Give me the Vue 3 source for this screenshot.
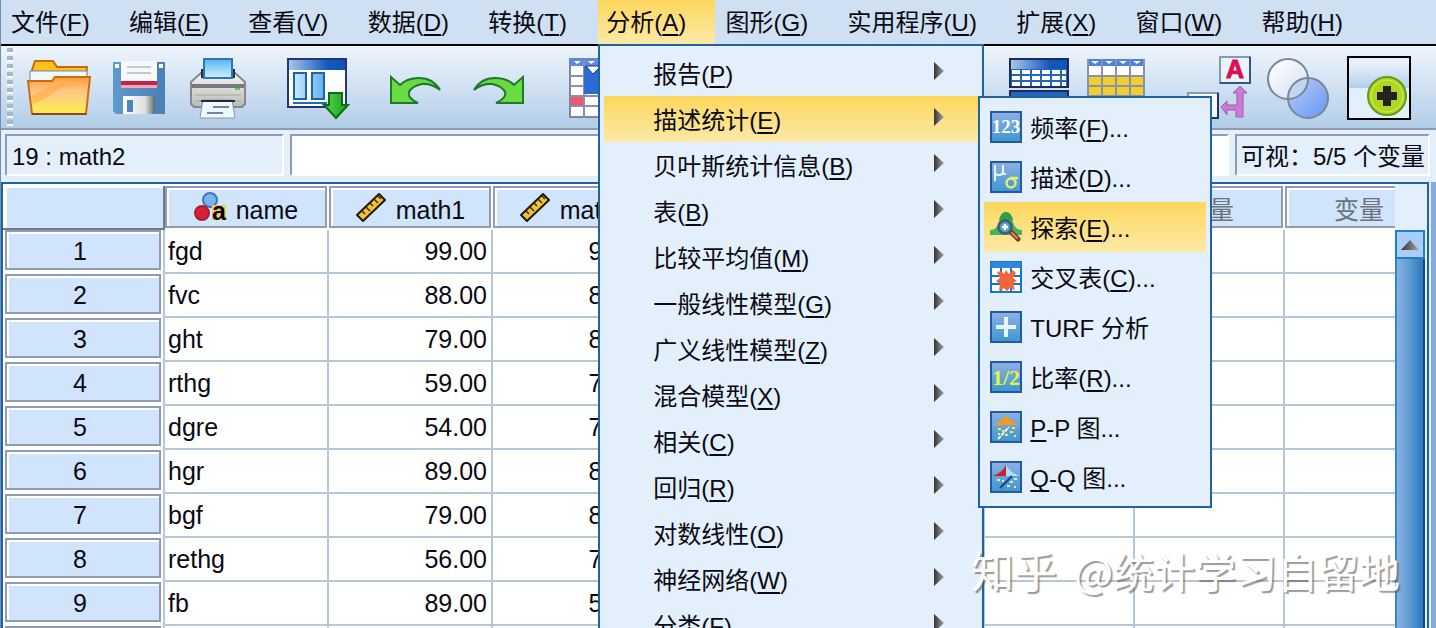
<template>
  <div class="app">
    <nav class="menubar">
      <div v-for="m in menus" :key="m.key" class="menu-wrap">
        <button
          type="button"
          class="menu-btn"
          :class="{ active: m.key === openMenu }"
          @click="toggleMenu(m.key)"
        >
          {{ m.label }}(<u>{{ m.key }}</u>)
        </button>
        <ul v-if="m.key === 'A' && openMenu === 'A'" class="dropdown" role="menu">
          <li v-for="(it, i) in analyzeItems" :key="i" class="drop-row" role="none">
            <button
              type="button"
              class="drop-item"
              :class="{ active: i === openItem }"
              role="menuitem"
              @click="openItem = i"
            >
              <span>{{ it.label }}(<u>{{ it.key }}</u>)</span>
              <svg class="drop-arrow" width="10" height="18" viewBox="0 0 10 18">
                <path d="M0 0 10 9 0 18z" fill="url(#arrowFill)" />
              </svg>
            </button>

            <ul v-if="i === 1 && openItem === 1" class="submenu" role="menu">
              <li v-for="s in describeItems" :key="s.icon" role="none">
                <button
                  type="button"
                  class="sub-item"
                  :class="{ active: s.icon === activeSub }"
                  role="menuitem"
                  @click="activeSub = s.icon"
                >
                  <svg width="32" height="32" viewBox="0 0 32 32">
                    <rect v-if="s.framed" x="1" y="1" width="30" height="30" fill="url(#tileFill)" stroke="#2459a5" stroke-width="2" />
                    <text v-if="s.icon === 'freq'" x="16" y="22" class="ico-serif" font-size="19" fill="#fff" text-anchor="middle">123</text>
                    <g v-else-if="s.icon === 'desc'">
                      <path d="M5 4v16M5 11q0 3 4 3t4-4V4M13 10v3h3" fill="none" stroke="#e9f3ff" stroke-width="2" />
                      <circle cx="21" cy="22" r="4.500" fill="none" stroke="#e3ee6c" stroke-width="2.600" />
                      <path d="M20 17h8" stroke="#e3ee6c" stroke-width="2.600" />
                    </g>
                    <g v-else-if="s.icon === 'explore'">
                      <path d="M0 24v-5q7 0 9-8 2-10 7-10t7 10q2 8 9 8v5z" fill="#42b65a" />
                      <path d="M9 9q2-8 7-8t7 8z" fill="#2f9e46" />
                      <path d="m21 21 7 7" stroke="#7a3d2c" stroke-width="5" stroke-linecap="round" />
                      <path d="m22 22 5 5" stroke="#d58a66" stroke-width="2" stroke-linecap="round" />
                      <circle cx="15" cy="16" r="6.500" fill="#4d9fd0" stroke="#46586b" stroke-width="2.600" />
                      <path d="M15 13v6M12 16h6" stroke="#fff" stroke-width="2.400" />
                    </g>
                    <g v-else-if="s.icon === 'cross'">
                      <path d="M1 1h30v30H1z" fill="#fff" stroke="#1876c8" stroke-width="2" />
                      <path d="M1 1h30v6H1z" fill="#2f86dc" />
                      <path d="M1 15h30M1 23h30M11 7v24M21 7v24" stroke="#1876c8" stroke-width="2" />
                      <path d="m7 11 4-1 3 3 2-4 3 4 4-4 3 3-3 5 4 3-4 2 2 7-5-2-3 3-3-3-5 3 1-7-4-3 4-3z" fill="#f0663a" />
                    </g>
                    <path v-else-if="s.icon === 'turf'" d="M16 6v20M6 16h20" stroke="#e8f6fb" stroke-width="4" />
                    <text v-else-if="s.icon === 'ratio'" x="16" y="24" class="ico-serif" font-size="22" fill="#e9f23a" text-anchor="middle">1/2</text>
                    <g v-else-if="s.icon === 'pp'">
                      <path d="M2 14q8-2 14-10 6 8 14 10z" fill="#f79a1e" />
                      <path d="m8 28 11-12" stroke="#fff" stroke-width="2" stroke-dasharray="4 1" />
                      <path d="M8 18h3M15 24h3M22 17h3M20 21h3M12 20h2M24 25h2M8 23h2" stroke="#e8ec6a" stroke-width="2" />
                    </g>
                    <g v-else>
                      <path d="M16 4v11H3q9-3 13-11z" fill="#c8202f" />
                      <path d="M16 4q4 8 14 11H16z" fill="#a9e2f7" />
                      <path d="m10 27 12-12" stroke="#17408f" stroke-width="2" />
                      <path d="M7 19h3M17 25h3M24 18h3M20 21h3M12 20h2M24 26h2" stroke="#e8ec9a" stroke-width="2" />
                    </g>
                  </svg>
                  <span>{{ s.pre }}<u>{{ s.key }}</u>{{ s.post }}</span>
                </button>
              </li>
            </ul>
          </li>
        </ul>
      </div>
    </nav>

    <div class="toolbar">
      <span class="grip"></span>
      <div class="tool-group">
        <button type="button" class="tool" aria-label="打开">
          <svg width="64" height="64" viewBox="0 0 64 64">
            <path d="M5 30V14l3-9h18l4 6h30l-2 17z" fill="#ffc21c" stroke="#c9690f" stroke-width="2" />
            <path d="M3 15h57v12H3z" fill="#f4f8fc" stroke="#6489b8" />
            <path d="M1 25h24l3-4h35l-4 37H5z" fill="url(#folderFill)" stroke="#cd6a14" stroke-width="2" />
            <path d="M5 40q16-12 38-12-12 4-17 9-7 6-20 11z" fill="#ff9c2a" opacity=".4" />
            <path d="M5 58h54" stroke="#8a4a17" stroke-width="2" />
          </svg>
        </button>
        <button type="button" class="tool" aria-label="保存">
          <svg width="64" height="64" viewBox="0 0 64 64">
            <path d="M6 6h52v52H9l-3-3z" fill="url(#diskFill)" />
            <path d="M14 5h36v26H14z" fill="#f6f8fb" />
            <path d="M14 25h36v4H14z" fill="#c92248" />
            <path d="M14 29h36v3H14z" fill="#f2a6b8" />
            <path d="M20 11h24M20 17h24" stroke="#c3c9d1" stroke-width="2" />
            <path d="M8 10h4M52 10h4" stroke="#fff" stroke-width="4" />
            <path d="M16 40h32v18H16z" fill="url(#metalFill)" />
            <path d="M20 44h6v12h-6z" fill="#4e86b8" />
          </svg>
        </button>
        <button type="button" class="tool" aria-label="打印">
          <svg width="64" height="64" viewBox="0 0 64 64">
            <path d="m4 26 10-9h34l10 9v22l-3 3H7l-3-3z" fill="url(#printFill)" stroke="#85888c" stroke-width="2" />
            <path d="M14 13v9h4v-9M44 13h4v9h-4z" fill="#26313d" />
            <path d="M17 3h28v19H17z" fill="url(#paperFill)" stroke="#2679bd" stroke-width="2" />
            <path d="M5 30h52" stroke="#77797c" stroke-width="4" />
            <path d="M48 33h5" stroke="#49d24c" stroke-width="2" />
            <path d="M8 39h46M8 45h46" stroke="#a6a6a6" />
            <path d="m16 44-3 18h35l-3-18z" fill="#f0f7fd" stroke="#8c98a6" />
            <path d="M14 45h34" stroke="#202b38" stroke-width="2" />
            <path d="M26 51h16M20 57h16" stroke="#6c87a3" stroke-width="2" />
          </svg>
        </button>
      </div>
      <div class="tool-group">
        <button type="button" class="tool" aria-label="重新调用对话框">
          <svg width="64" height="64" viewBox="0 0 64 64">
            <path d="M1 3h58v48H1z" fill="#fff" stroke="#27376d" stroke-width="2" />
            <path d="M2 4h56v10H2z" fill="url(#titleFill)" />
            <path d="M7 17h12v26H7zM25 17h12v26H25z" fill="url(#paneFill)" stroke="#1964ad" stroke-width="2" />
            <path d="M6 47h34" stroke="#1770ba" stroke-width="2" />
            <path d="M42 37h13v12h6L49 62 37 49h5z" fill="url(#goFill)" stroke="#087012" stroke-width="2" />
          </svg>
        </button>
      </div>
      <div class="tool-group">
        <button type="button" class="tool" aria-label="撤销">
          <svg width="64" height="64" viewBox="0 0 64 64">
            <path d="M4 21v26h27q-11-5-9-11 3-6 13-8 9-1 18 6-7-12-21-12-12 0-19 7z" fill="#69dc43" stroke="#21782a" stroke-width="2" />
          </svg>
        </button>
        <button type="button" class="tool" aria-label="重做">
          <svg width="64" height="64" viewBox="0 0 64 64">
            <path d="M56 21v26H29q11-5 9-11-3-6-13-8-9-1-18 6 7-12 21-12 12 0 19 7z" fill="#69dc43" stroke="#21782a" stroke-width="2" />
          </svg>
        </button>
      </div>
      <div class="tool-group">
        <button type="button" class="tool" aria-label="转到个案">
          <svg width="64" height="64" viewBox="0 0 64 64">
            <path d="M3 3h58v58H3z" fill="#fff" stroke="#7887a8" stroke-width="2" />
            <path d="M3 3h58v7H3z" fill="#5b8be5" />
            <path d="m7 5 3 3 4-3zM21 5l3 3 4-3z" fill="#fff" />
            <path d="M4 41h12v9H4z" fill="#f2566b" />
            <path d="M3 20h58M3 30h58M3 40h58M3 50h58M17 3v58M32 3v58M46 3v58" stroke="#8793ac" stroke-width="2" />
            <path d="M17 10h44v28H17z" fill="#2d6bd2" />
            <path d="m19 10 7 8 8-8z" fill="#fff" stroke="#153e86" />
          </svg>
        </button>
      </div>
      <div class="tool-group right">
        <button type="button" class="tool" aria-label="插入个案">
          <svg width="64" height="64" viewBox="0 0 64 64">
            <path d="M3 3h58v28H3zM3 35h58v26H3z" fill="#2467b8" stroke="#1d2b5e" stroke-width="2" />
            <path d="M4 4h56v9H4z" fill="url(#titleFill)" />
            <path d="M5 16h54M5 22h54M5 28h54" stroke="#fff" stroke-width="4" stroke-dasharray="8 2" />
          </svg>
        </button>
        <button type="button" class="tool" aria-label="插入变量">
          <svg width="64" height="64" viewBox="0 0 64 64">
            <path d="M1 3h56v58H1z" fill="#f3cd2c" />
            <path d="M1 3h56v7H1z" fill="#4f83df" />
            <path d="m4 5 4 3 4-3zM18 5l4 3 4-3zM32 5l4 3 4-3zM46 5l4 3 4-3z" fill="#fff" />
            <path d="M1 10h56v10H1z" fill="#fff" />
            <path d="M1 3v58M15 3v58M29 3v58M43 3v58M57 3v58M1 20h56M1 30h56M1 40h56" stroke="#8793a9" stroke-width="2" />
          </svg>
        </button>
      </div>
      <div class="tool-group">
        <button type="button" class="tool" aria-label="值标签">
          <svg width="64" height="64" viewBox="0 0 64 64">
            <path d="M33 1h30v26H33z" fill="#e8f3fc" stroke="#8598b8" stroke-width="2" />
            <path d="M63 1v26H33" fill="none" stroke="#33558f" stroke-width="2" />
            <text x="48" y="22" class="ico-sans" font-size="25" fill="#d9114e" stroke="#d9114e" text-anchor="middle">A</text>
            <path d="M1 37h30v25H1z" fill="#f4f9fe" stroke="#8598b8" stroke-width="2" />
            <path d="M31 37v25H1" fill="none" stroke="#1d3564" stroke-width="2" />
            <path d="m53 30 7 7h-4v24h-7v-7H40v5l-6-8 6-6v4h10V37h-4z" fill="#cf78d4" stroke="#a35bad" />
          </svg>
        </button>
        <button type="button" class="tool" aria-label="使用变量集">
          <svg width="64" height="64" viewBox="0 0 64 64">
            <circle cx="21" cy="23" r="20" fill="url(#setFill)" />
            <circle cx="41" cy="42" r="20" fill="url(#setBlue)" />
            <path d="M21.300 39A20 20 0 0 1 41 22.500 20 20 0 0 1 21.300 43z" fill="#c4d4f3" />
            <circle cx="21" cy="23" r="20" fill="none" stroke="#7b8695" stroke-width="2" />
            <circle cx="41" cy="42" r="20" fill="none" stroke="#7b8695" stroke-width="2" />
          </svg>
        </button>
        <button type="button" class="tool" aria-label="定制工具栏">
          <svg width="64" height="64" viewBox="0 0 64 64">
            <path d="M1 1h62v62H1z" fill="#e3effb" stroke="#000" stroke-width="2" />
            <path d="M2 6h60v26H2z" fill="url(#panelFill)" />
            <circle cx="40" cy="40" r="19" fill="#afd620" stroke="#629a1d" stroke-width="2" />
            <circle cx="40" cy="40" r="16" fill="none" stroke="#d2ed57" />
            <path d="M40 30v20M30 40h20" stroke="#222" stroke-width="8" />
          </svg>
        </button>
      </div>
    </div>

    <div class="status">
      <div class="cell-name">19 : math2</div>
      <input v-model="cellValue" class="cell-editor" type="text" aria-label="单元格编辑器" />
      <div class="visible">可视：5/5 个变量</div>
    </div>

    <div class="sheet">
      <div class="grid">
        <table>
          <colgroup>
            <col class="col-num" />
            <col v-for="n in 5" :key="n" class="col-var" />
            <col v-for="n in 3" :key="'e' + n" class="col-empty" />
          </colgroup>
          <thead>
            <tr>
              <th class="corner"></th>
              <th v-for="c in columns" :key="c">
                <span class="head">
                  <svg v-if="c === 'name'" width="33" height="32" viewBox="0 0 33 32">
                    <circle cx="16" cy="9" r="7" fill="#78b4ee" stroke="#3f78b5" stroke-width="2" />
                    <circle cx="8" cy="22" r="7" fill="#d92038" stroke="#ad1d31" stroke-width="2" />
                    <path d="M18 14h14v15H18z" fill="#f6cf51" />
                    <text x="25" y="29" class="ico-sans" font-size="25" fill="#000" text-anchor="middle">a</text>
                  </svg>
                  <svg v-else width="32" height="32" viewBox="0 0 32 32">
                    <path d="M2 24 24 3l6 6L8 30z" fill="#f2c137" stroke="#1d1a10" stroke-width="2" stroke-linejoin="round" />
                    <path d="m7 20 3 3M11 16l4 4M15 12l3 3M19 8l4 4M23 5l3 3" stroke="#3a2c08" stroke-width="1.500" />
                  </svg>
                  {{ c }}
                </span>
              </th>
              <th v-for="n in 3" :key="n"><span class="head dim">变量</span></th>
            </tr>
          </thead>
          <tbody>
            <tr v-for="(r, i) in rows" :key="i">
              <th scope="row" class="row-num"><span class="num">{{ i + 1 }}</span></th>
              <td v-for="(v, j) in r" :key="j" :class="{ value: j > 0 }">{{ v }}</td>
              <td v-for="n in 8 - r.length" :key="'e' + n"></td>
            </tr>
          </tbody>
        </table>
      </div>
      <div class="scroll">
        <button type="button" class="scroll-up" aria-label="向上滚动">
          <svg width="18" height="10" viewBox="0 0 18 10"><path d="m9 0 9 10H0z" fill="url(#arrowFill)" /></svg>
        </button>
        <div class="thumb"></div>
      </div>
    </div>

    <div class="watermark"><span class="brand">知乎</span> @统计学习自留地</div>

    <svg class="defs" width="0" height="0" aria-hidden="true">
      <defs>
        <linearGradient id="arrowFill"><stop offset="0" stop-color="#333" /><stop offset="1" stop-color="#a5a5a5" /></linearGradient>
        <linearGradient id="tileFill" x2="0" y2="1"><stop offset="0" stop-color="#8fb0e2" /><stop offset="1" stop-color="#3c97cf" /></linearGradient>
        <linearGradient id="folderFill" x2="0" y2="1"><stop offset="0" stop-color="#ff9c32" /><stop offset=".4" stop-color="#ffc98a" /><stop offset="1" stop-color="#ffed4b" /></linearGradient>
        <linearGradient id="diskFill"><stop offset="0" stop-color="#5e9acb" /><stop offset="1" stop-color="#4a80b3" /></linearGradient>
        <linearGradient id="metalFill"><stop offset="0" stop-color="#fff" /><stop offset=".7" stop-color="#dedede" /><stop offset="1" stop-color="#5d6a76" /></linearGradient>
        <linearGradient id="printFill" x2="0" y2="1"><stop offset="0" stop-color="#f6f6f4" /><stop offset="1" stop-color="#b9b9b6" /></linearGradient>
        <linearGradient id="paperFill" x2="0" y2="1"><stop offset="0" stop-color="#58b4f2" /><stop offset="1" stop-color="#d4effd" /></linearGradient>
        <linearGradient id="titleFill"><stop offset="0" stop-color="#a9c4ea" /><stop offset=".7" stop-color="#1058bd" /><stop offset="1" stop-color="#0c55b8" /></linearGradient>
        <linearGradient id="paneFill"><stop offset="0" stop-color="#c8e8fc" /><stop offset="1" stop-color="#62b2ec" /></linearGradient>
        <linearGradient id="goFill"><stop offset="0" stop-color="#5ed84e" /><stop offset="1" stop-color="#149c1c" /></linearGradient>
        <linearGradient id="setFill" x2="1" y2="1"><stop offset="0" stop-color="#fff" /><stop offset="1" stop-color="#d4dff2" /></linearGradient>
        <linearGradient id="setBlue" x2="1" y2="1"><stop offset="0" stop-color="#b9cdf8" /><stop offset="1" stop-color="#6796f3" /></linearGradient>
        <linearGradient id="panelFill" x2="0" y2="1"><stop offset="0" stop-color="#ebf3fc" /><stop offset="1" stop-color="#b3cfea" /></linearGradient>
      </defs>
    </svg>
  </div>
</template>

<script setup>
import { ref } from 'vue'

const menus = [
  { label: '文件', key: 'F' },
  { label: '编辑', key: 'E' },
  { label: '查看', key: 'V' },
  { label: '数据', key: 'D' },
  { label: '转换', key: 'T' },
  { label: '分析', key: 'A' },
  { label: '图形', key: 'G' },
  { label: '实用程序', key: 'U' },
  { label: '扩展', key: 'X' },
  { label: '窗口', key: 'W' },
  { label: '帮助', key: 'H' },
]

const analyzeItems = [
  { label: '报告', key: 'P' },
  { label: '描述统计', key: 'E' },
  { label: '贝叶斯统计信息', key: 'B' },
  { label: '表', key: 'B' },
  { label: '比较平均值', key: 'M' },
  { label: '一般线性模型', key: 'G' },
  { label: '广义线性模型', key: 'Z' },
  { label: '混合模型', key: 'X' },
  { label: '相关', key: 'C' },
  { label: '回归', key: 'R' },
  { label: '对数线性', key: 'O' },
  { label: '神经网络', key: 'W' },
  { label: '分类', key: 'F' },
]

const describeItems = [
  { icon: 'freq', framed: true, pre: '频率(', key: 'F', post: ')...' },
  { icon: 'desc', framed: true, pre: '描述(', key: 'D', post: ')...' },
  { icon: 'explore', framed: false, pre: '探索(', key: 'E', post: ')...' },
  { icon: 'cross', framed: false, pre: '交叉表(', key: 'C', post: ')...' },
  { icon: 'turf', framed: true, pre: 'TURF 分析', key: '', post: '' },
  { icon: 'ratio', framed: true, pre: '比率(', key: 'R', post: ')...' },
  { icon: 'pp', framed: true, pre: '', key: 'P', post: '-P 图...' },
  { icon: 'qq', framed: true, pre: '', key: 'Q', post: '-Q 图...' },
]

const columns = ['name', 'math1', 'math2', 'math3', 'math4']
const rows = [
  ['fgd', '99.00', '98.00'],
  ['fvc', '88.00', '89.00'],
  ['ght', '79.00', '85.00'],
  ['rthg', '59.00', '76.00'],
  ['dgre', '54.00', '75.00'],
  ['hgr', '89.00', '88.00'],
  ['bgf', '79.00', '86.00'],
  ['rethg', '56.00', '78.00'],
  ['fb', '89.00', '56.00'],
  ['', '', ''],
]

const openMenu = ref('A')
const openItem = ref(1)
const activeSub = ref('explore')
const cellValue = ref('')

function toggleMenu(key) {
  openMenu.value = openMenu.value === key ? null : key
}
</script>

<style>
body {
  background: #e3effb;
}
</style>

<style scoped>
.app {
  --line: #1f63a3;
  --panel: #e3effb;
  --head: #d0e4fb;
  --edge: #919dae;
  position: relative;
  display: flex;
  flex-direction: column;
  box-sizing: border-box;
  height: 100vh;
  overflow: hidden;
  border-left: 1px solid #6f8fb5;
  background: var(--panel);
  color: #0a0a14;
  font-family: 'Liberation Sans', 'Noto Sans CJK SC', sans-serif;
  font-size: 24px;
  line-height: 32px;
}
button {
  margin: 0;
  padding: 0;
  border: 0;
  background: none;
  color: inherit;
  font: inherit;
  text-align: left;
  white-space: nowrap;
}
ul {
  margin: 0;
  padding: 0;
  list-style: none;
}
svg {
  display: block;
  flex: none;
}
u {
  text-underline-offset: 3px;
  text-decoration-thickness: 2px;
  text-decoration-skip-ink: none;
}
.defs {
  position: absolute;
}
.ico-serif {
  font-family: 'Liberation Serif', serif;
  font-weight: 700;
}
.ico-sans {
  font-family: 'Liberation Sans', sans-serif;
  font-weight: 700;
}

.menubar {
  display: flex;
  flex: none;
  justify-content: space-between;
  padding: 0 64px 0 2px;
  border-bottom: 2px solid #000;
  background: #cfe0f2;
}
.menu-wrap {
  position: relative;
}
.menu-btn {
  height: 44px;
  padding: 2px 29px 0 8px;
}
.menu-btn.active,
.drop-item.active,
.sub-item.active {
  background: linear-gradient(#fdd75c, #fde9a8);
}

.dropdown {
  position: absolute;
  top: 100%;
  left: 0;
  z-index: 10;
  box-sizing: border-box;
  width: 386px;
  padding: 4px;
  border: 2px solid var(--line);
  background: var(--panel);
}
.drop-row {
  position: relative;
}
.drop-item {
  display: flex;
  align-items: center;
  justify-content: space-between;
  width: 100%;
  height: 46px;
  padding: 4px 34px 0 49px;
}
.drop-arrow {
  margin-bottom: 8px;
}
.submenu {
  position: absolute;
  top: 0;
  left: 100%;
  box-sizing: border-box;
  width: 234px;
  padding: 4px;
  border: 2px solid var(--line);
  background: var(--panel);
}
.sub-item {
  display: flex;
  align-items: center;
  gap: 8px;
  width: 100%;
  height: 50px;
  padding-left: 6px;
}
.sub-item span {
  padding-top: 4px;
}

.toolbar {
  display: flex;
  flex: none;
  gap: 20px;
  padding: 10px 17px 8px 6px;
  border-bottom: 2px solid #8f9cad;
  background: linear-gradient(#eef5fd, #b2cde8);
}
.grip {
  width: 6px;
  margin: -8px -14px -6px 0;
  background: repeating-linear-gradient(#a9b8c9 0 4px, #f8fbff 4px 6px, transparent 6px 8px);
}
.tool-group {
  display: flex;
}
.tool-group.right {
  margin-left: auto;
}
.tool {
  display: flex;
  justify-content: center;
  width: 80px;
}

.status {
  display: flex;
  flex: none;
  gap: 6px;
  padding: 4px 6px 6px 4px;
}
.cell-name,
.cell-editor,
.visible {
  box-sizing: border-box;
  height: 42px;
  border: 2px solid #fff;
  border-top-color: var(--edge);
  border-left-color: var(--edge);
  line-height: 42px;
}
.cell-name {
  width: 279px;
  padding-left: 5px;
}
.cell-editor {
  flex: 1;
  min-width: 0;
  border-radius: 0;
  background: #fff;
  font: inherit;
  outline: none;
}
.visible {
  padding: 0 3px 0 4px;
  white-space: nowrap;
}

.sheet {
  display: flex;
  flex: 1;
  min-height: 0;
  margin-right: 7px;
  border: 2px solid var(--line);
  border-bottom: 0;
  box-shadow: 2px 0 #e3effb, 7px 0 #84abe0;
}
.grid {
  flex: 1;
  min-width: 0;
  overflow: hidden;
  padding-top: 2px;
  background: #fff;
}
table {
  width: 1432px;
  table-layout: fixed;
  border-spacing: 0;
  font-size: 25px;
}
.col-num {
  width: 162px;
}
.col-var {
  width: 164px;
}
.col-empty {
  width: 150px;
}
th,
td {
  box-sizing: border-box;
  height: 44px;
  padding: 0;
  font-weight: 400;
  vertical-align: top;
}
.corner {
  border: solid #6d7b8b;
  border-width: 0 2px 2px 0;
  background: var(--head);
  box-shadow: inset 4px 2px #fff;
}
.head,
.num {
  display: flex;
  align-items: center;
  justify-content: center;
  box-sizing: border-box;
  border: 2px solid var(--edge);
  background: var(--head);
  box-shadow: inset 2px 2px #fff;
}
.head {
  gap: 9px;
  height: 42px;
  margin-right: 2px;
  padding-top: 6px;
}
.head svg {
  margin-bottom: 6px;
}
.dim {
  color: #6b737e;
}
.num {
  height: 40px;
  margin: 0 2px;
  padding: 2px 6px 0 0;
}
td {
  padding: 0 4px 0 3px;
  border: solid #b5c8da;
  border-width: 0 2px 2px 0;
  line-height: 42px;
}
.row-num {
  border-right: 2px solid #b5c8da;
}
.value {
  text-align: right;
}

.scroll {
  display: flex;
  flex: none;
  flex-direction: column;
  width: 30px;
  padding: 46px 2px 0 0;
}
.scroll-up {
  display: flex;
  align-items: center;
  justify-content: center;
  box-sizing: border-box;
  height: 29px;
  border: 2px solid #1f7fc4;
  background: #a9cdf7;
}
.thumb {
  flex: 1;
  border-left: 2px solid #2c8bd0;
  border-right: 2px solid #124a85;
  background: linear-gradient(90deg, #8ab2de, #659fd6 40%, #2f78bd);
}

.watermark {
  position: absolute;
  right: 36px;
  bottom: 34px;
  z-index: 20;
  color: #fff;
  font-family: 'Noto Sans CJK SC', sans-serif;
  font-size: 41px;
  line-height: 48px;
  text-shadow: 2px 2px 1px rgba(90, 90, 90, 0.6);
  white-space: nowrap;
}
.brand {
  margin-right: 8px;
  font-size: 43px;
}
</style>
